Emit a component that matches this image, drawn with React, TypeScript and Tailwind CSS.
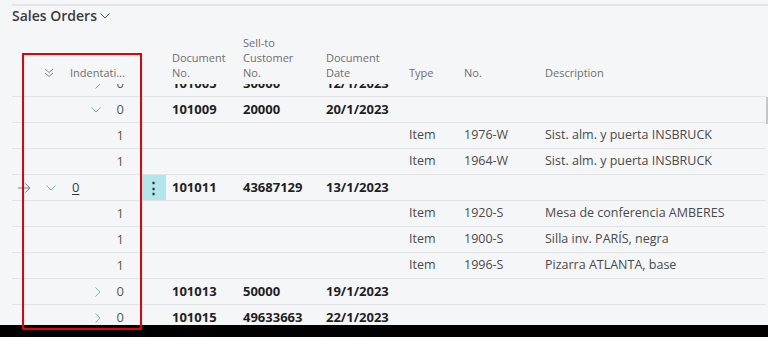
type Row = {
  ind: 0 | 1
  chev?: 'down' | 'right'
  doc?: string
  cust?: string
  date?: string
  type?: string
  no?: string
  desc?: string
  selected?: boolean
}

const rows: Row[] = [
  { ind: 0, chev: 'right', doc: '101005', cust: '30000', date: '12/1/2023' },
  { ind: 0, chev: 'down', doc: '101009', cust: '20000', date: '20/1/2023' },
  { ind: 1, type: 'Item', no: '1976-W', desc: 'Sist. alm. y puerta INSBRUCK' },
  { ind: 1, type: 'Item', no: '1964-W', desc: 'Sist. alm. y puerta INSBRUCK' },
  { ind: 0, chev: 'down', doc: '101011', cust: '43687129', date: '13/1/2023', selected: true },
  { ind: 1, type: 'Item', no: '1920-S', desc: 'Mesa de conferencia AMBERES' },
  { ind: 1, type: 'Item', no: '1900-S', desc: 'Silla inv. PARÍS, negra' },
  { ind: 1, type: 'Item', no: '1996-S', desc: 'Pizarra ATLANTA, base' },
  { ind: 0, chev: 'right', doc: '101013', cust: '50000', date: '19/1/2023' },
  { ind: 0, chev: 'right', doc: '101015', cust: '49633663', date: '22/1/2023' },
]

const cols = 'grid grid-cols-[129px_25px_71px_83px_83px_55px_81px_1fr]'

function Chevron({ dir, className }: { dir: 'down' | 'right'; className?: string }) {
  return dir === 'down' ? (
    <svg width="10" height="6" viewBox="0 0 10 6" className={className}>
      <path d="M0.5 0.5 L5 5 L9.5 0.5" fill="none" stroke="currentColor" strokeWidth="1" />
    </svg>
  ) : (
    <svg width="6" height="10" viewBox="0 0 6 10" className={className}>
      <path d="M0.5 0.5 L5 5 L0.5 9.5" fill="none" stroke="currentColor" strokeWidth="1" />
    </svg>
  )
}

function IndentCell({ r }: { r: Row }) {
  if (r.selected) {
    // fila seleccionada: flecha, chevron y valor editable
    return (
      <div className="flex items-center pl-[6px]">
        <svg width="13" height="10" viewBox="0 0 13 10" className="text-[#7a7a7a]">
          <path d="M0 5 H12 M7.5 0.5 L12 5 L7.5 9.5" fill="none" stroke="currentColor" strokeWidth="1" />
        </svg>
        <Chevron dir="down" className="ml-[15px] text-[#6fb3bc]" />
        <span className="ml-[16px] text-[13px] text-[#3a3a3a] underline underline-offset-2">0</span>
      </div>
    )
  }
  return (
    <div className="flex items-center justify-end pr-[17px]">
      {r.chev && <Chevron dir={r.chev} className="text-[#6fb3bc] mr-[16px]" />}
      <span className="text-[13px] text-[#5e564c]">{r.ind}</span>
    </div>
  )
}

export default function App() {
  return (
    <div
      className="relative h-[337px] w-[768px] overflow-hidden bg-[#f5f6f8] pt-[4px] text-[12.5px]"
      style={{ fontFamily: '"Open Sans", "Noto Sans", sans-serif' }}
    >
      <div className="ml-[12px] h-[2px] bg-[#e3e5e8]" />
      <div className="flex h-[18px] items-center pl-[12px]">
        <span className="text-[14px] font-semibold text-[#3b3b3b]">Sales Orders</span>
        <Chevron dir="down" className="ml-[3px] mt-[1px] text-[#555]" />
      </div>

      {/* Cabecera */}
      <div className={`${cols} ml-[12px] h-[60px] items-end pb-[4px] text-[11px] leading-[15px] text-[#6f6f6f]`}>
        <div className="flex items-center pl-[32px]">
          <svg width="10" height="10" viewBox="0 0 10 10" className="text-[#8a8a8a]">
            <path d="M1 1 L5 4.5 L9 1 M1 5 L5 8.5 L9 5" fill="none" stroke="currentColor" strokeWidth="1" />
          </svg>
          <span className="ml-[16px]">Indentati...</span>
        </div>
        <div />
        <div className="px-[6px]">Document<br />No.</div>
        <div className="px-[6px]">Sell-to<br />Customer<br />No.</div>
        <div className="px-[6px]">Document<br />Date</div>
        <div className="px-[6px]">Type</div>
        <div className="px-[6px]">No.</div>
        <div className="px-[6px]">Description</div>
      </div>

      {/* Filas */}
      <div className="h-[241px] overflow-hidden">
        <div className="-mt-[13px]">
          {rows.map((r, i) => (
            <div
              key={i}
              className={`${cols} ml-[12px] mr-[2px] h-[26px] border-b border-[#e2e3e5] [&>div]:flex [&>div]:items-center`}
            >
              <IndentCell r={r} />
              <div className={r.selected ? 'justify-center bg-[#b3e6ea] text-[#333] text-[15px] font-bold' : ''}>
                {r.selected ? '⋮' : ''}
              </div>
              <div className="px-[6px] text-[13px] font-bold text-[#1f1f1f]">{r.doc}</div>
              <div className="px-[6px] text-[13px] font-bold text-[#1f1f1f]">{r.cust}</div>
              <div className="px-[6px] text-[13px] font-bold text-[#1f1f1f]">{r.date}</div>
              <div className="px-[6px] text-[#4a4a4a]">{r.type}</div>
              <div className="px-[6px] text-[#4a4a4a]">{r.no}</div>
              <div className="px-[6px] text-[#4a4a4a]">{r.desc}</div>
            </div>
          ))}
        </div>
      </div>
      <div className="h-[12px] bg-black" />

      {/* barra de desplazamiento */}
      <div className="absolute left-[766px] top-[97px] h-[27px] w-[2px] bg-[#c6c6c6]" />
      {/* recuadro rojo de resaltado */}
      <div className="absolute left-[22px] top-[53px] h-[277px] w-[120px] border-2 border-[#e5000a]" />
    </div>
  )
}
